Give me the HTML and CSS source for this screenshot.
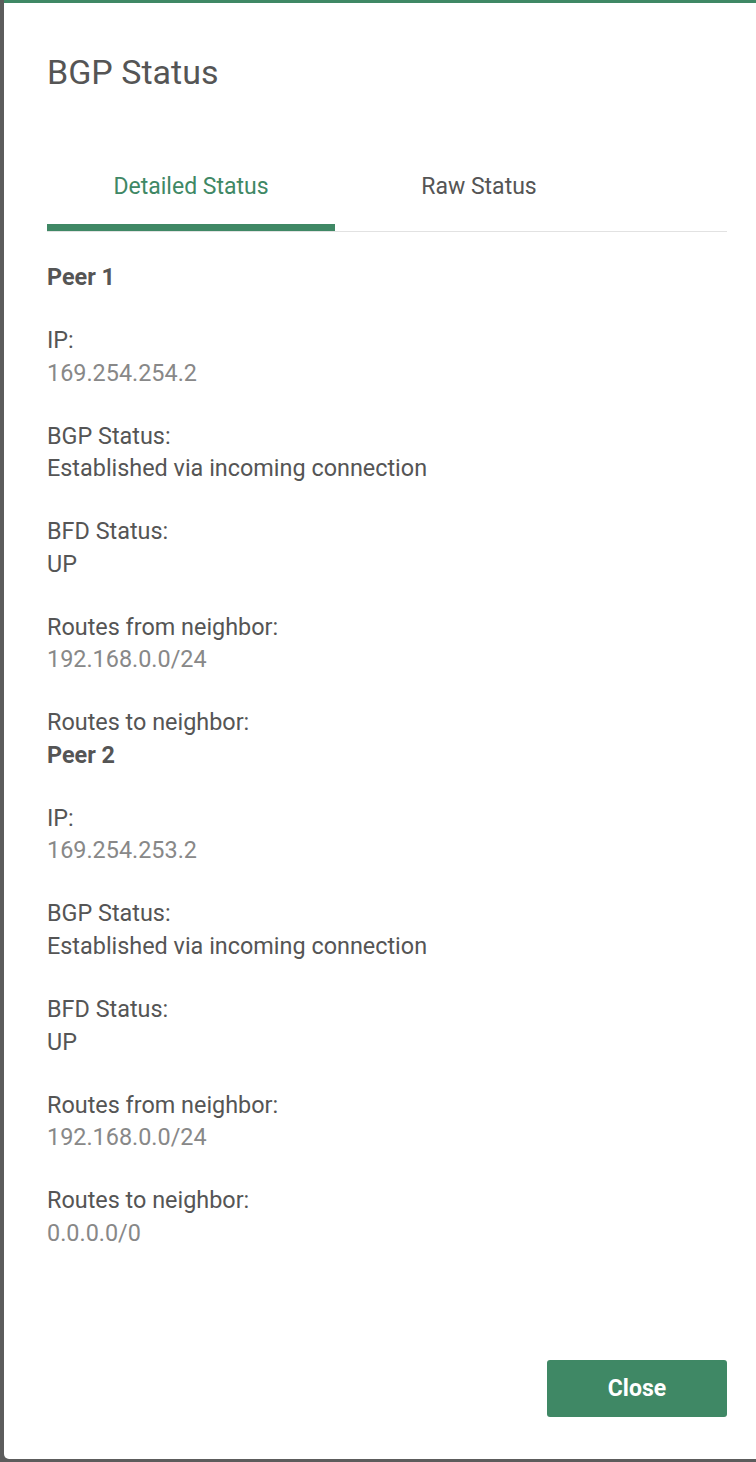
FILE: index.html
```html
<!DOCTYPE html>
<html>
<head>
<meta charset="utf-8">
<link rel="stylesheet" href="styles.css">
</head>
<body>
<div class="modal">
  <h1 class="title">BGP Status</h1>
  <div class="tabs">
    <div class="tab active">Detailed Status</div>
    <div class="tab">Raw Status</div>
  </div>
  <div class="content">
    <div class="peer">Peer 1</div>
    <div class="field"><div class="label">IP:</div><div class="value muted">169.254.254.2</div></div>
    <div class="field"><div class="label">BGP Status:</div><div class="value">Established via incoming connection</div></div>
    <div class="field"><div class="label">BFD Status:</div><div class="value">UP</div></div>
    <div class="field"><div class="label">Routes from neighbor:</div><div class="value muted">192.168.0.0/24</div></div>
    <div class="field"><div class="label">Routes to neighbor:</div></div>
    <div class="peer">Peer 2</div>
    <div class="field"><div class="label">IP:</div><div class="value muted">169.254.253.2</div></div>
    <div class="field"><div class="label">BGP Status:</div><div class="value">Established via incoming connection</div></div>
    <div class="field"><div class="label">BFD Status:</div><div class="value">UP</div></div>
    <div class="field"><div class="label">Routes from neighbor:</div><div class="value muted">192.168.0.0/24</div></div>
    <div class="field"><div class="label">Routes to neighbor:</div><div class="value muted">0.0.0.0/0</div></div>
  </div>
  <div class="footer">
    <button class="btn">Close</button>
  </div>
</div>
</body>
</html>
```
FILE: styles.css
```css
html, body {
  margin: 0;
  padding: 0;
}
body {
  background: #5c5c5c;
  font-family: Roboto, "Liberation Sans", sans-serif;
  color: #555;
  height: 1462px;
  overflow: hidden;
}
.modal {
  box-sizing: border-box;
  margin-left: 4px;
  height: 1459px;
  background: #fff;
  border-top: 3px solid #3f8865;
  border-bottom-left-radius: 5px;
  padding: 0 29px 42px 43px;
  display: flex;
  flex-direction: column;
}
.title {
  margin: 49px 0 0;
  font-size: 34px;
  font-weight: 400;
  line-height: 40px;
  color: #555;
}
.tabs {
  margin-top: 56px;
  display: flex;
  border-bottom: 1px solid #e2e2e2;
}
.tab {
  width: 288px;
  box-sizing: border-box;
  height: 83px;
  padding-top: 24px;
  line-height: 30px;
  font-size: 23px;
  text-align: center;
  color: #555;
  border-bottom: 7px solid transparent;
}
.tab.active {
  color: #3f8865;
  border-bottom-color: #3f8865;
}
.content {
  margin-top: 29px;
  font-size: 23.4px;
  line-height: 32.6px;
}
.peer {
  font-weight: 700;
}
.field {
  margin-top: 30.4px;
}
.value.muted {
  color: #888;
}
.footer {
  margin-top: auto;
  display: flex;
  justify-content: flex-end;
}
.btn {
  width: 180px;
  height: 57px;
  border: none;
  border-radius: 3px;
  background: #3f8865;
  color: #fff;
  font-family: Roboto, "Liberation Sans", sans-serif;
  font-size: 23px;
  font-weight: 700;
}
```
